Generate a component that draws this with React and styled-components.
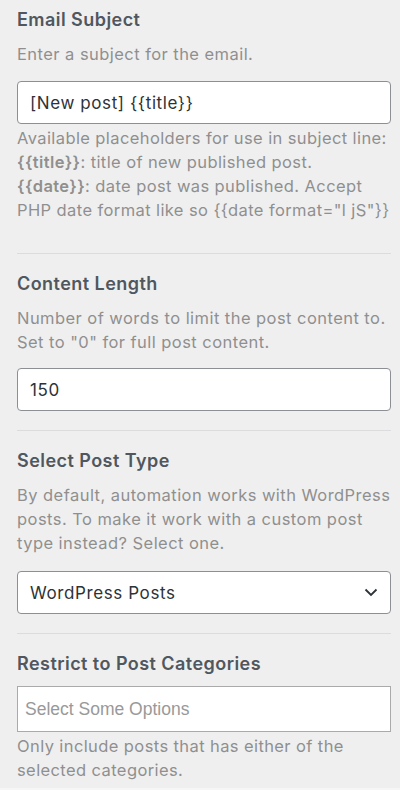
import React from 'react'
import styled, { createGlobalStyle } from 'styled-components'

const GlobalStyle = createGlobalStyle`
  html, body {
    margin: 0;
    padding: 0;
    background: #f6f6f6;
  }
  body {
    font-family: Inter, "Noto Sans", sans-serif;
    -webkit-font-smoothing: antialiased;
  }
`

const Panel = styled.div`
  height: 788px;
  overflow: hidden;
  background: #efefef;
  padding: 0 9px 0 17px;
  box-sizing: border-box;
`

const Section = styled.section`
  padding: ${props => (props.first ? '8px 0 31px' : '18px 0 19px')};
  border-bottom: ${props => (props.last ? 'none' : '1px solid #dcdcde')};
`

const Heading = styled.h3`
  margin: 0;
  font-size: 18px;
  line-height: 24px;
  font-weight: 600;
  letter-spacing: 0.45px;
  color: #50575e;
`

const Description = styled.p`
  margin: 10px 0 ${props => props.gap || 15}px;
  font-size: 16.5px;
  line-height: 24px;
  letter-spacing: 0.45px;
  color: #8f8f8f;
`

const Help = styled.p`
  margin: 2px 0 0;
  font-size: 16.5px;
  line-height: 24px;
  letter-spacing: 0.4px;
  color: #8f8f8f;

  b {
    font-weight: 600;
  }
`

const TextInput = styled.div`
  height: 43px;
  box-sizing: border-box;
  display: flex;
  align-items: center;
  padding: 0 12px;
  background: #fff;
  border: 1px solid #8c8f94;
  border-radius: 4px;
  font-size: 17px;
  letter-spacing: 0.6px;
  color: #2c3338;
`

const Select = styled(TextInput)`
  justify-content: space-between;
  padding-right: 12px;
`

const ChosenBox = styled.div`
  margin-top: 10px;
  height: 46px;
  box-sizing: border-box;
  display: flex;
  align-items: center;
  padding: 0 7px;
  background: #fff;
  border: 1px solid #aaa;
  font-family: "Liberation Sans", Arial, sans-serif;
  font-size: 17.5px;
  color: #999;
`

function Chevron() {
  return (
    <svg width="14" height="9" viewBox="0 0 14 9">
      <polyline points="1.5,1.5 7,7 12.5,1.5" fill="none" stroke="#2c3338" strokeWidth="1.8" />
    </svg>
  )
}

export default function App() {
  return (
    <>
      <GlobalStyle />
      <Panel>
        <Section first>
          <Heading>Email Subject</Heading>
          <Description>Enter a subject for the email.</Description>
          <TextInput>{'[New post] {{title}}'}</TextInput>
          <Help>
            Available placeholders for use in subject line:<br />
            <b>{'{{title}}'}</b>: title of new published post.<br />
            <b>{'{{date}}'}</b>: date post was published. Accept PHP date format like so {'{{date format="l jS"}}'}
          </Help>
        </Section>

        <Section>
          <Heading>Content Length</Heading>
          <Description gap={14}>
            Number of words to limit the post content to. Set to "0" for full post content.
          </Description>
          <TextInput>150</TextInput>
        </Section>

        <Section>
          <Heading>Select Post Type</Heading>
          <Description gap={16}>
            By default, automation works with WordPress posts. To make it work with a custom post type instead? Select one.
          </Description>
          <Select>
            WordPress Posts
            <Chevron />
          </Select>
        </Section>

        <Section last>
          <Heading>Restrict to Post Categories</Heading>
          <ChosenBox>Select Some Options</ChosenBox>
          <Help>Only include posts that has either of the selected categories.</Help>
        </Section>
      </Panel>
    </>
  )
}
